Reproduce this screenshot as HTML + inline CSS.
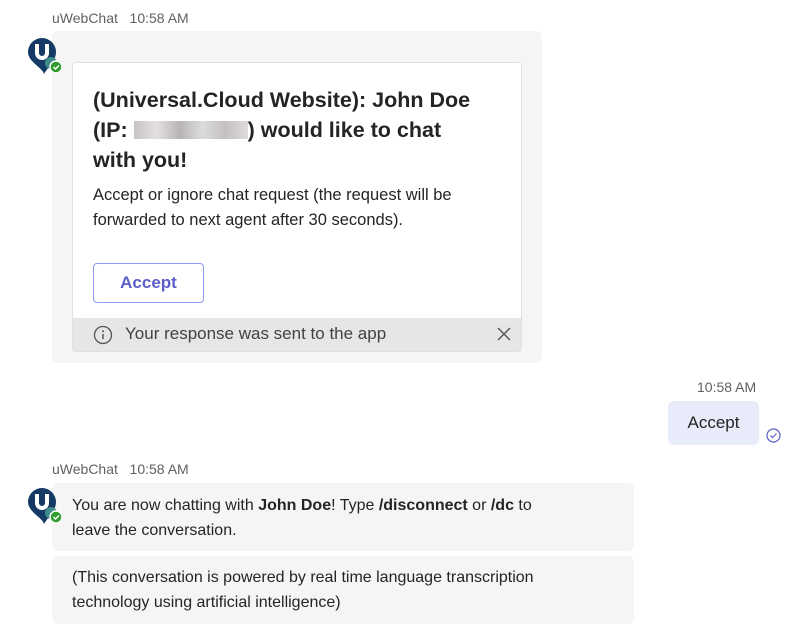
<!DOCTYPE html>
<html><head><style>
body{margin:0;width:798px;height:643px;background:#fff;font-family:"Segoe UI","Liberation Sans",sans-serif;color:#242424;position:relative;overflow:hidden}
.a{position:absolute}
.hdr{font-size:14px;color:#616161;white-space:nowrap}
.t{font-size:16px;line-height:25px}
.av{z-index:5}
</style></head><body>
<div class="a hdr" style="left:52px;top:10px">uWebChat&nbsp;&nbsp; 10:58 AM</div>
<div class="a" style="left:52px;top:31px;width:490px;height:332px;background:#f5f5f5;border-radius:6px"></div>
<svg class="a av" style="left:26px;top:36px" width="38" height="40" viewBox="0 0 38 40">
<path d="M16 2a14 14 0 0 1 14 14c0 8-7 14-12 22c-1-6-16-12-16-22A14 14 0 0 1 16 2z" fill="#163a66"/>
<path d="M11 8v9a5 5 0 0 0 10 0V8" stroke="#fff" stroke-width="4" fill="none"/>
<circle cx="25" cy="27" r="6" fill="#3d8c8a"/>
<circle cx="30" cy="31" r="6" fill="#2f9e2f" stroke="#fff" stroke-width="1.5"/>
<path d="M27.5 31l2 2 3.5-3.5" stroke="#fff" stroke-width="1.5" fill="none"/>
</svg>
<div class="a" style="left:72px;top:62px;width:448px;height:288px;background:#fff;border:1px solid #e0e0e0;border-radius:4px;overflow:hidden">
 <div class="a" style="left:20px;top:22px;width:385px;font-size:21.5px;font-weight:600;line-height:30px">(Universal.Cloud Website): John Doe (IP: <span style="display:inline-block;width:114px;height:18px;background:linear-gradient(90deg,#c8c4c4,#e4e0e0,#b8b4b4,#dcdcdc,#c4c0c0,#e0dcdc);vertical-align:-2px"></span>) would like to chat with you!</div>
 <div class="a t" style="left:20px;top:120px;width:390px;font-size:16.5px">Accept or ignore chat request (the request will be forwarded to next agent after 30 seconds).</div>
 <div class="a" style="left:20px;top:200px;width:109px;height:38px;border:1px solid #9299f7;border-radius:4px;color:#5b5fc7;font-size:17px;font-weight:600;text-align:center;line-height:38px">Accept</div>
 <div class="a" style="left:0;top:255px;width:448px;height:34px;background:#e6e6e6">
  <svg class="a" style="left:20px;top:7px" width="20" height="20"><circle cx="10" cy="10" r="8.5" stroke="#555" stroke-width="1.3" fill="none"/><path d="M10 9v5" stroke="#555" stroke-width="1.5"/><circle cx="10" cy="6.3" r="1" fill="#555"/></svg>
  <div class="a" style="left:52px;top:6px;font-size:17px;color:#424242">Your response was sent to the app</div>
  <svg class="a" style="left:424px;top:9px" width="14" height="14"><path d="M1 1l12 12M13 1L1 13" stroke="#555" stroke-width="1.4"/></svg>
 </div>
</div>
<div class="a hdr" style="left:697px;top:379px">10:58 AM</div>
<div class="a" style="left:668px;top:401px;width:91px;height:44px;background:#e8ebfa;border-radius:6px;font-size:17px;text-align:center;line-height:44px">Accept</div>
<svg class="a" style="left:766px;top:428px" width="15" height="15"><circle cx="7.5" cy="7.5" r="6.5" stroke="#5b5fc7" stroke-width="1.2" fill="none"/><path d="M4.5 7.5l2 2 4-4" stroke="#5b5fc7" stroke-width="1.2" fill="none"/></svg>
<div class="a hdr" style="left:52px;top:461px">uWebChat&nbsp;&nbsp; 10:58 AM</div>
<div class="a t" style="left:52px;top:483px;width:542px;height:68px;padding:0 20px;background:#f5f5f5;border-radius:6px"><div style="padding-top:10px;width:500px">You are now chatting with <b>John Doe</b>! Type <b>/disconnect</b> or <b>/dc</b> to leave the conversation.</div></div>
<div class="a t" style="left:52px;top:556px;width:542px;height:68px;padding:0 20px;background:#f5f5f5;border-radius:6px"><div style="padding-top:9px;width:510px">(This conversation is powered by real time language transcription technology using artificial intelligence)</div></div>
<svg class="a av" style="left:26px;top:486px" width="38" height="40" viewBox="0 0 38 40">
<path d="M16 2a14 14 0 0 1 14 14c0 8-7 14-12 22c-1-6-16-12-16-22A14 14 0 0 1 16 2z" fill="#163a66"/>
<path d="M11 8v9a5 5 0 0 0 10 0V8" stroke="#fff" stroke-width="4" fill="none"/>
<circle cx="25" cy="27" r="6" fill="#3d8c8a"/>
<circle cx="30" cy="31" r="6" fill="#2f9e2f" stroke="#fff" stroke-width="1.5"/>
<path d="M27.5 31l2 2 3.5-3.5" stroke="#fff" stroke-width="1.5" fill="none"/>
</svg>
</body></html>
